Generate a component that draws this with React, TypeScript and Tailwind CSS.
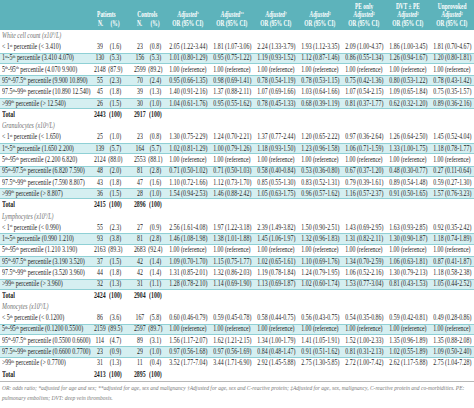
import React from "react";

type R = {
  label: string;
  pn: string;
  pp: string;
  cn: string;
  cp: string;
  or?: string[];
};

const REF = Array(7).fill("1.00 (reference)");

const groups: { title: string; rows: R[]; total: [string, string, string, string] }[] = [
  {
    title: "White cell count (x10^9/L)",
    rows: [
      { label: "< 1^st percentile (< 3.410)", pn: "39", pp: "(1.6)", cn: "23", cp: "(0.8)", or: ["2.05 (1.22-3.44)", "1.81 (1.07-3.06)", "2.24 (1.33-3.79)", "1.93 (1.12-3.35)", "2.09 (1.00-4.37)", "1.86 (1.00-3.45)", "1.81 (0.70-4.67)"] },
      { label: "1^st-5^th percentile (3.410 4.070)", pn: "130", pp: "(5.3)", cn: "156", cp: "(5.3)", or: ["1.01 (0.80-1.29)", "0.95 (0.75-1.22)", "1.19 (0.93-1.52)", "1.12 (0.87-1.46)", "0.86 (0.55-1.34)", "1.26 (0.94-1.67)", "1.20 (0.80-1.81)"] },
      { label: "5^th-95^th percentile (4.070 9.900)", pn: "2148", pp: "(87.9)", cn: "2599", cp: "(89.2)", or: REF },
      { label: "95^th-97.5^th percentile (9.900 10.890)", pn: "55", pp: "(2.3)", cn: "70", cp: "(2.4)", or: ["0.95 (0.66-1.35)", "0.98 (0.69-1.41)", "0.78 (0.54-1.19)", "0.78 (0.53-1.15)", "0.75 (0.42-1.36)", "0.80 (0.53-1.22)", "0.78 (0.43-1.42)"] },
      { label: "97.5^th-99^th percentile (10.890 12.540)", pn: "45", pp: "(1.8)", cn: "39", cp: "(1.3)", or: ["1.40 (0.91-2.16)", "1.37 (0.88-2.11)", "1.07 (0.69-1.66)", "1.03 (0.64-1.66)", "1.07 (0.54-2.15)", "1.09 (0.65-1.84)", "0.75 (0.35-1.57)"] },
      { label: ">99^th percentile (> 12.540)", pn: "26", pp: "(1.5)", cn: "30", cp: "(1.0)", or: ["1.04 (0.61-1.76)", "0.95 (0.55-1.62)", "0.78 (0.45-1.33)", "0.68 (0.39-1.19)", "0.81 (0.37-1.77)", "0.62 (0.32-1.20)", "0.89 (0.36-2.16)"] },
    ],
    total: ["2443", "(100)", "2917", "(100)"],
  },
  {
    title: "Granulocytes (x10^9/L)",
    rows: [
      { label: "< 1^st percentile (< 1.650)", pn: "25", pp: "(1.0)", cn: "23", cp: "(0.8)", or: ["1.30 (0.75-2.29)", "1.24 (0.70-2.21)", "1.37 (0.77-2.44)", "1.20 (0.65-2.22)", "0.97 (0.36-2.64)", "1.26 (0.64-2.50)", "1.45 (0.52-4.04)"] },
      { label: "1^st-5^th percentile (1.650 2.200)", pn: "139", pp: "(5.7)", cn: "164", cp: "(5.7)", or: ["1.02 (0.81-1.29)", "1.00 (0.79-1.26)", "1.18 (0.93-1.50)", "1.23 (0.96-1.58)", "1.06 (0.71-1.59)", "1.33 (1.00-1.75)", "1.18 (0.78-1.77)"] },
      { label: "5^th-95^th percentile (2.200 6.820)", pn: "2124", pp: "(88.0)", cn: "2553", cp: "(88.1)", or: REF },
      { label: "95^th-97.5^th percentile (6.820 7.590)", pn: "48", pp: "(2.0)", cn: "81", cp: "(2.8)", or: ["0.71 (0.50-1.02)", "0.71 (0.50-1.03)", "0.58 (0.40-0.84)", "0.53 (0.36-0.80)", "0.67 (0.37-1.20)", "0.48 (0.30-0.77)", "0.27 (0.11-0.64)"] },
      { label: "97.5^th-99^th percentile (7.590 8.807)", pn: "43", pp: "(1.8)", cn: "47", cp: "(1.6)", or: ["1.10 (0.72-1.66)", "1.12 (0.73-1.70)", "0.85 (0.55-1.30)", "0.83 (0.52-1.31)", "0.79 (0.39-1.61)", "0.89 (0.54-1.48)", "0.59 (0.27-1.30)"] },
      { label: ">99^th percentile (> 8.807)", pn: "36", pp: "(1.5)", cn: "28", cp: "(1.0)", or: ["1.54 (0.94-2.53)", "1.46 (0.88-2.42)", "1.05 (0.63-1.75)", "0.96 (0.57-1.62)", "1.16 (0.57-2.37)", "0.91 (0.50-1.65)", "1.57 (0.76-3.23)"] },
    ],
    total: ["2415", "(100)", "2896", "(100)"],
  },
  {
    title: "Lymphocytes (x10^9/L)",
    rows: [
      { label: "< 1^st percentile (< 0.990)", pn: "55", pp: "(2.3)", cn: "27", cp: "(0.9)", or: ["2.56 (1.61-4.08)", "1.97 (1.22-3.18)", "2.39 (1.49-3.82)", "1.50 (0.90-2.51)", "1.43 (0.69-2.95)", "1.63 (0.93-2.85)", "0.92 (0.35-2.42)"] },
      { label: "1^st-5^th percentile (0.990 1.210)", pn: "93", pp: "(3.8)", cn: "81", cp: "(2.8)", or: ["1.46 (1.08-1.98)", "1.38 (1.01-1.88)", "1.45 (1.06-1.97)", "1.32 (0.96-1.83)", "1.31 (0.82-2.11)", "1.30 (0.90-1.87)", "1.18 (0.74-1.89)"] },
      { label: "5^th-95^th percentile (1.210 3.190)", pn: "2163", pp: "(89.3)", cn: "2683", cp: "(92.4)", or: REF },
      { label: "95^th-97.5^th percentile (3.190 3.520)", pn: "37", pp: "(1.5)", cn: "42", cp: "(1.4)", or: ["1.09 (0.70-1.70)", "1.15 (0.75-1.77)", "1.02 (0.65-1.61)", "1.10 (0.69-1.76)", "1.34 (0.70-2.59)", "1.06 (0.63-1.81)", "0.87 (0.41-1.87)"] },
      { label: "97.5^th-99^th percentile (3.520 3.960)", pn: "44", pp: "(1.8)", cn: "42", cp: "(1.4)", or: ["1.31 (0.85-2.01)", "1.32 (0.86-2.03)", "1.19 (0.78-1.84)", "1.24 (0.79-1.95)", "1.06 (0.52-2.16)", "1.30 (0.79-2.13)", "1.18 (0.58-2.38)"] },
      { label: ">99^th percentile (> 3.960)", pn: "32", pp: "(1.3)", cn: "31", cp: "(1.1)", or: ["1.28 (0.78-2.10)", "1.14 (0.69-1.90)", "1.13 (0.69-1.87)", "1.02 (0.60-1.74)", "1.53 (0.77-3.04)", "0.81 (0.43-1.53)", "1.05 (0.44-2.52)"] },
    ],
    total: ["2424", "(100)", "2904", "(100)"],
  },
  {
    title: "Monocytes (x10^9/L)",
    rows: [
      { label: "< 5^th percentile (< 0.1200)", pn: "86", pp: "(3.6)", cn: "167", cp: "(5.8)", or: ["0.60 (0.46-0.79)", "0.59 (0.45-0.78)", "0.58 (0.44-0.75)", "0.56 (0.43-0.75)", "0.54 (0.35-0.86)", "0.59 (0.42-0.81)", "0.49 (0.28-0.86)"] },
      { label: "5^th-95^th percentile (0.1200 0.5500)", pn: "2159", pp: "(89.5)", cn: "2597", cp: "(89.7)", or: REF },
      { label: "95^th-97.5^th percentile (0.5500 0.6600)", pn: "114", pp: "(4.7)", cn: "89", cp: "(3.1)", or: ["1.56 (1.17-2.07)", "1.62 (1.21-2.15)", "1.34 (1.00-1.79)", "1.41 (1.05-1.91)", "1.52 (1.00-2.33)", "1.35 (0.96-1.89)", "1.35 (0.88-2.08)"] },
      { label: "97.5^th-99^th percentile (0.6600 0.7700)", pn: "23", pp: "(0.9)", cn: "29", cp: "(1.0)", or: ["0.97 (0.56-1.68)", "0.97 (0.56-1.69)", "0.84 (0.48-1.47)", "0.91 (0.51-1.62)", "0.81 (0.31-2.13)", "1.02 (0.55-1.89)", "1.09 (0.50-2.40)"] },
      { label: ">99^th percentile (> 0.7700)", pn: "31", pp: "(1.3)", cn: "11", cp: "(0.4)", or: ["3.52 (1.77-7.04)", "3.44 (1.71-6.90)", "2.92 (1.45-5.88)", "2.75 (1.30-5.85)", "2.72 (1.00-7.42)", "2.62 (1.17-5.88)", "2.75 (1.04-7.28)"] },
    ],
    total: ["2413", "(100)", "2895", "(100)"],
  },
];

function withSup(s: string, supCls = "text-[5px]") {
  const parts = s.split(/\^(st|th|9)/);
  return parts.map((p, i) =>
    i % 2 === 1 ? (
      <sup key={i} className={supCls}>
        {p}
      </sup>
    ) : (
      <React.Fragment key={i}>{p}</React.Fragment>
    )
  );
}

/* condensed text: the reference uses a narrow serif */
function T({ children, left }: { children: React.ReactNode; left?: boolean }) {
  return (
    <span
      className={
        "inline-block whitespace-nowrap " +
        (left ? "origin-left scale-x-[0.76]" : "origin-center scale-x-[0.75]")
      }
    >
      {children}
    </span>
  );
}

function C({ w, children }: { w: string; children?: React.ReactNode }) {
  return <div className={w + " shrink-0 flex justify-center"}>{children !== undefined ? <T>{children}</T> : null}</div>;
}

function DataRow({ r, hl }: { r: R; hl: boolean }) {
  return (
    <div
      className={
        "flex items-center h-[11.3px] whitespace-nowrap " +
        (hl ? "bg-[#d5eff1] border-y border-[#8fd0d5]" : "")
      }
    >
      <div className="w-[91px] shrink-0 pl-[2px]">
        <T left>{withSup(r.label)}</T>
      </div>
      <C w="w-[18px]">{r.pn}</C>
      <C w="w-[12px]">{r.pp}</C>
      <div className="w-[11px] shrink-0" />
      <C w="w-[15px]">{r.cn}</C>
      <C w="w-[16px]">{r.cp}</C>
      <div className="w-[3px] shrink-0" />
      {(r.or ?? []).map((o, i) => (
        <C key={i} w="w-[44px]">
          {o}
        </C>
      ))}
    </div>
  );
}

function TotalRow({ t }: { t: [string, string, string, string] }) {
  return (
    <div className="flex items-center h-[11.3px] whitespace-nowrap font-bold">
      <div className="w-[91px] shrink-0 pl-[2px]">
        <T left>Total</T>
      </div>
      <C w="w-[18px]">{t[0]}</C>
      <C w="w-[12px]">{t[1]}</C>
      <div className="w-[11px] shrink-0" />
      <C w="w-[15px]">{t[2]}</C>
      <C w="w-[16px]">{t[3]}</C>
    </div>
  );
}

function HeadCol({ lines }: { lines: React.ReactNode[] }) {
  return (
    <div className="w-[44px] shrink-0 flex flex-col items-center">
      {lines.map((l, i) => (
        <div key={i} className="flex justify-center">
          <T>{l}</T>
        </div>
      ))}
    </div>
  );
}

const S = ({ c }: { c: string }) => <sup className="text-[4.6px]">{c}</sup>;
const Adj = ({ c }: { c: string }) => (
  <span className="italic">
    Adjusted
    <S c={c} />
  </span>
);

export default function App() {
  return (
    <div
      className="w-[474px] h-[408px] overflow-hidden bg-white text-[#242424] text-[7.8px] leading-none"
      style={{ fontFamily: '"Liberation Serif", "DejaVu Serif", serif' }}
    >
      {/* header */}
      <div className="flex items-end h-[30px] bg-[#5db3bb] text-white font-bold text-[7.2px] leading-[8.4px] pb-[2px]">
        <div className="w-[91px] shrink-0" />
        <div className="w-[30px] shrink-0 flex flex-col">
          <div className="flex justify-center">
            <T>Patients</T>
          </div>
          <div className="flex">
            <C w="w-[18px]">N.</C>
            <C w="w-[12px]">(%)</C>
          </div>
        </div>
        <div className="w-[11px] shrink-0" />
        <div className="w-[31px] shrink-0 flex flex-col">
          <div className="flex justify-center">
            <T>Controls</T>
          </div>
          <div className="flex">
            <C w="w-[15px]">N.</C>
            <C w="w-[16px]">(%)</C>
          </div>
        </div>
        <div className="w-[3px] shrink-0" />
        <HeadCol lines={[<Adj c="*" />, "OR (95% CI)"]} />
        <HeadCol lines={[<Adj c="**" />, "OR (95% CI)"]} />
        <HeadCol lines={[<Adj c="†" />, "OR (95% CI)"]} />
        <HeadCol lines={[<Adj c="‡" />, "OR (95% CI)"]} />
        <HeadCol lines={["PE only", <Adj c="‡" />, "OR (95% CI)"]} />
        <HeadCol lines={["DVT ± PE", <Adj c="‡" />, "OR (95% CI)"]} />
        <HeadCol lines={["Unprovoked", <Adj c="‡" />, "OR (95% CI)"]} />
      </div>

      {groups.map((g, gi) => (
        <div key={gi}>
          <div className="flex items-center h-[11.3px] pl-[2px] italic text-[#707070] whitespace-nowrap">
            <T left>{withSup(g.title, "text-[4.8px]")}</T>
          </div>
          {g.rows.map((r, ri) => (
            <DataRow key={ri} r={r} hl={ri % 2 === 1} />
          ))}
          <TotalRow t={g.total} />
        </div>
      ))}

      <div className="border-t border-[#b8b8b8] mt-[0.5px] pt-[1px] px-[2px] italic text-[#7a7a7a] text-[5.5px] leading-[10.5px]">
        OR: odds ratio; *adjusted for age and sex; **adjusted for age, sex and malignancy †Adjusted for age, sex and C-reactive protein; ‡Adjusted for age, sex, malignancy, C-reactive protein and co-morbidities. PE: pulmonary embolism; DVT: deep vein thrombosis.
      </div>
    </div>
  );
}
